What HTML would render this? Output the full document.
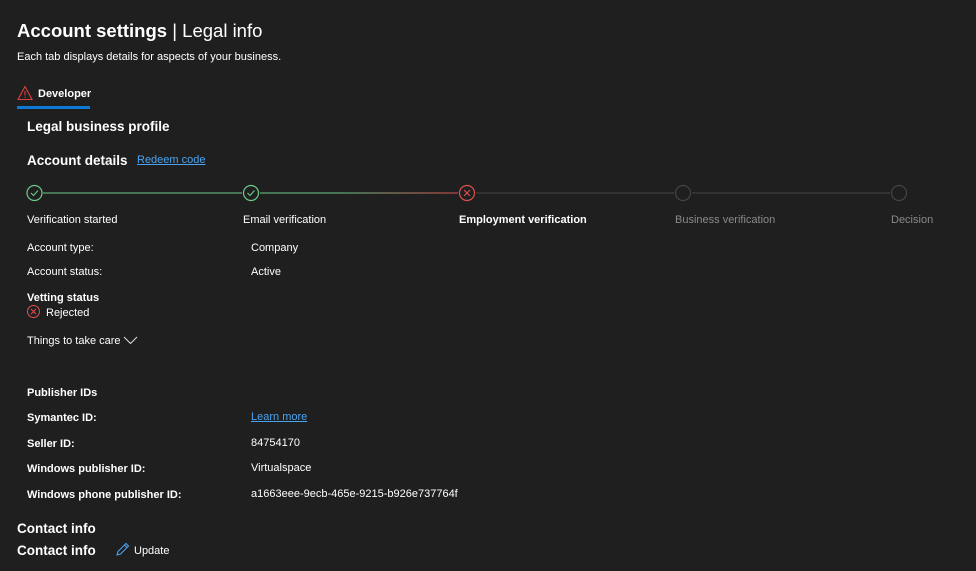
<!DOCTYPE html>
<html><head><style>
*{margin:0;padding:0;box-sizing:border-box}
body{width:976px;height:571px;background:#1f1f1f;color:#fff;font-family:"Liberation Sans",sans-serif;position:relative;overflow:hidden}
.a{position:absolute;white-space:nowrap}
.s{font-size:11px;margin-top:1px}
.b{font-weight:bold}
.h{font-size:13.5px;font-weight:bold}
.l{color:#4aa3f0;text-decoration:underline}
.g{color:#8a8a8a}
</style></head><body>
<div class="a" style="left:17px;top:20px;font-size:18.5px"><b>Account settings</b> | Legal info</div>
<div class="a s" style="left:17px;top:50px">Each tab displays details for aspects of your business.</div>
<svg class="a" style="left:17px;top:85px" width="16" height="16" viewBox="0 0 16 16"><path d="M8 1.5L15 14.5H1Z" fill="none" stroke="#e04040" stroke-width="1.1"/><path d="M8 6v4.5M8 11.7v1" stroke="#e04040" stroke-width="1.1"/></svg>
<div class="a s b" style="left:38px;top:87px">Developer</div>
<div class="a" style="left:17px;top:106px;width:73px;height:3px;background:#0f78d4"></div>
<div class="a h" style="left:27px;top:119px">Legal business profile</div>
<div class="a h" style="left:27px;top:153px">Account details</div>
<div class="a s l" style="left:137px;top:153px">Redeem code</div>
<svg class="a" style="left:0;top:180px" width="976" height="26">
<defs><linearGradient id="gr" x1="0" x2="1"><stop offset="0.4" stop-color="#6ccb8a"/><stop offset="1" stop-color="#e05050"/></linearGradient></defs>
<line x1="43" y1="13" x2="242" y2="13" stroke="#6ccb8a"/>
<rect x="260" y="12.5" width="198" height="1" fill="url(#gr)"/>
<line x1="476" y1="13" x2="674" y2="13" stroke="#444"/>
<line x1="692" y1="13" x2="890" y2="13" stroke="#444"/>
<circle cx="34.5" cy="13" r="7.5" fill="none" stroke="#6ccb8a" stroke-width="1.2"/>
<path d="M31 13l2.5 2.5 4.5-5" fill="none" stroke="#6ccb8a" stroke-width="1.1"/>
<circle cx="251" cy="13" r="7.5" fill="none" stroke="#6ccb8a" stroke-width="1.2"/>
<path d="M247.5 13l2.5 2.5 4.5-5" fill="none" stroke="#6ccb8a" stroke-width="1.1"/>
<circle cx="467" cy="13" r="7.5" fill="none" stroke="#e05050" stroke-width="1.2"/>
<path d="M464 10l6 6M470 10l-6 6" stroke="#e05050" stroke-width="1.1"/>
<circle cx="683" cy="13" r="7.5" fill="none" stroke="#444" stroke-width="1.2"/>
<circle cx="899" cy="13" r="7.5" fill="none" stroke="#444" stroke-width="1.2"/>
</svg>
<div class="a s" style="left:27px;top:213px">Verification started</div>
<div class="a s" style="left:243px;top:213px">Email verification</div>
<div class="a s b" style="left:459px;top:213px">Employment verification</div>
<div class="a s g" style="left:675px;top:213px">Business verification</div>
<div class="a s g" style="left:891px;top:213px">Decision</div>
<div class="a s" style="left:27px;top:241px">Account type:</div>
<div class="a s" style="left:251px;top:241px">Company</div>
<div class="a s" style="left:27px;top:265px">Account status:</div>
<div class="a s" style="left:251px;top:265px">Active</div>
<div class="a s b" style="left:27px;top:291px">Vetting status</div>
<svg class="a" style="left:26px;top:304px" width="15" height="15"><circle cx="7.5" cy="7.5" r="6" fill="none" stroke="#e05050"/><path d="M5 5l5 5M10 5l-5 5" stroke="#e05050"/></svg>
<div class="a s" style="left:46px;top:306px">Rejected</div>
<div class="a s" style="left:27px;top:334px">Things to take care</div>
<svg class="a" style="left:123px;top:336px" width="15" height="9"><path d="M1 1l6.5 6.5L14 1" fill="none" stroke="#ddd"/></svg>
<div class="a s b" style="left:27px;top:386px">Publisher IDs</div>
<div class="a s b" style="left:27px;top:411px">Symantec ID:</div>
<div class="a s l" style="left:251px;top:410px">Learn more</div>
<div class="a s b" style="left:27px;top:437px">Seller ID:</div>
<div class="a s" style="left:251px;top:436px">84754170</div>
<div class="a s b" style="left:27px;top:462px">Windows publisher ID:</div>
<div class="a s" style="left:251px;top:461px">Virtualspace</div>
<div class="a s b" style="left:27px;top:488px">Windows phone publisher ID:</div>
<div class="a s" style="left:251px;top:487px">a1663eee-9ecb-465e-9215-b926e737764f</div>
<div class="a h" style="left:17px;top:521px">Contact info</div>
<div class="a h" style="left:17px;top:543px">Contact info</div>
<svg class="a" style="left:115px;top:542px" width="15" height="15"><path d="M2 13l1-3.5L11 1.5l2.5 2.5L5.5 12Z M9.5 3l2.5 2.5" fill="none" stroke="#4aa3f0" stroke-width="1.1"/></svg>
<div class="a s" style="left:134px;top:544px">Update</div>
</body></html>
